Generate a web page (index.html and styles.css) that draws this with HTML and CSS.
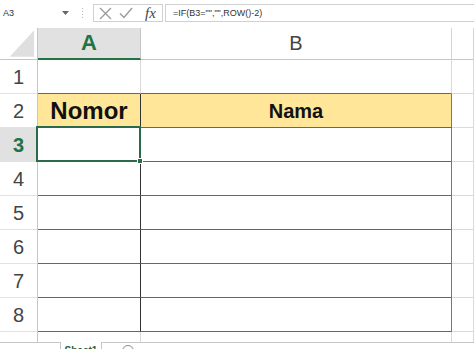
FILE: index.html
```html
<!DOCTYPE html>
<html lang="en">
  <head>
    <meta charset="UTF-8" />
    <meta name="viewport" content="width=device-width, initial-scale=1.0" />
    <title>Nomor otomatis</title>
    <link rel="stylesheet" href="styles.css">
  </head>
  <body>
    <!-- Formula bar -->
    <div class="formula-bar">
      <div class="name-box">
        <span>A3</span>
        <svg class="caret" width="7" height="4" viewBox="0 0 7 4"><path d="M0 0h7L3.5 4z" fill="#666"/></svg>
      </div>
      <div class="grip">
        <svg width="3" height="11" viewBox="0 0 3 11"><g fill="#b5b5b5"><rect x="1" y="0" width="1" height="1"/><rect x="1" y="3" width="1" height="1"/><rect x="1" y="6" width="1" height="1"/><rect x="1" y="9" width="1" height="1"/></g></svg>
      </div>
      <div class="fx-buttons">
        <svg width="13" height="13" viewBox="0 0 13 13"><path d="M1 1l11 11M12 1L1 12" stroke="#9a9a9a" stroke-width="1.3" fill="none"/></svg>
        <svg width="14" height="12" viewBox="0 0 14 12"><path d="M1 6.5l4 4L13 1" stroke="#9a9a9a" stroke-width="1.4" fill="none"/></svg>
        <span class="fx">fx</span>
      </div>
      <div class="formula-input">=IF(B3="","",ROW()-2)</div>
    </div>

    <!-- Worksheet -->
    <div class="sheet">
      <div class="grid">
        <div class="corner">
          <svg width="38" height="32" viewBox="0 0 38 32"><path d="M35 2v27H10z" fill="#dfdfdf"/></svg>
        </div>
        <div class="col-head active">A</div>
        <div class="col-head">B</div>
        <div class="col-head"></div>

        <div class="row-head">1</div>
        <div class="cell above"></div>
        <div class="cell above"></div>
        <div class="cell"></div>

        <div class="row-head">2</div>
        <div class="cell tbl-a title big">Nomor</div>
        <div class="cell tbl-b title">Nama</div>
        <div class="cell"></div>

        <div class="row-head active">3</div>
        <div class="cell tbl-a selected"></div>
        <div class="cell tbl-b"></div>
        <div class="cell"></div>

        <div class="row-head">4</div>
        <div class="cell tbl-a"></div>
        <div class="cell tbl-b"></div>
        <div class="cell"></div>

        <div class="row-head">5</div>
        <div class="cell tbl-a"></div>
        <div class="cell tbl-b"></div>
        <div class="cell"></div>

        <div class="row-head">6</div>
        <div class="cell tbl-a"></div>
        <div class="cell tbl-b"></div>
        <div class="cell"></div>

        <div class="row-head">7</div>
        <div class="cell tbl-a"></div>
        <div class="cell tbl-b"></div>
        <div class="cell"></div>

        <div class="row-head">8</div>
        <div class="cell tbl-a"></div>
        <div class="cell tbl-b"></div>
        <div class="cell"></div>

        <div class="row-head">9</div>
        <div class="cell"></div>
        <div class="cell"></div>
        <div class="cell"></div>
      </div>
    </div>

    <!-- Sheet tabs -->
    <div class="tabs">
      <div class="tab-nav"></div>
      <div class="tab active">Sheet1</div>
      <div class="tab-rest"><span class="add-sheet"></span></div>
    </div>
  </body>
</html>
```

FILE: styles.css
```css
body {
  margin: 0;
  height: 349px;
  overflow: hidden;
  background: #fff;
  font-family: "Liberation Sans", Arial, sans-serif;
  color: #444;
}

/* Formula bar */
.formula-bar {
  height: 28px;
  display: flex;
  align-items: flex-start;
  padding-top: 4px;
  box-sizing: border-box;
}

.name-box {
  width: 72px;
  height: 18px;
  display: flex;
  align-items: center;
  justify-content: space-between;
  padding: 0 3px;
  box-sizing: border-box;
  font-size: 9px;
  color: #333;
}

.grip {
  width: 21px;
  height: 18px;
  display: flex;
  align-items: center;
  justify-content: center;
}

.fx-buttons {
  width: 70px;
  height: 18px;
  border: 1px solid #d0d0d0;
  box-sizing: border-box;
  display: flex;
  align-items: center;
  padding-left: 5px;
  gap: 7px;
}

.fx {
  font-family: "Liberation Serif", serif;
  font-style: italic;
  font-size: 15px;
  color: #444;
  margin-left: 5px;
  line-height: 1;
}

.formula-input {
  flex: 1;
  height: 18px;
  margin-left: 2px;
  border: 1px solid #d0d0d0;
  border-right: none;
  box-sizing: border-box;
  padding-left: 7px;
  font-size: 9px;
  line-height: 16px;
  color: #333;
}

/* Worksheet grid */
.sheet {
  height: 314px;
  overflow: hidden;
}

.grid {
  display: grid;
  grid-template-columns: 38px 103px 311px 1fr;
  grid-template-rows: 32px repeat(9, 34px);
}

.grid > div {
  box-sizing: border-box;
  display: flex;
  align-items: center;
  justify-content: center;
}

.corner {
  border-right: 1px solid #c6c6c6;
  border-bottom: 1px solid #c6c6c6;
}

.col-head {
  font-size: 20px;
  border-right: 1px solid #d4d4d4;
  border-bottom: 1px solid #c6c6c6;
}

.col-head.active {
  background: #e1e1e1;
  color: #217346;
  font-weight: bold;
  font-size: 22px;
  border-bottom: 2px solid #217346;
  border-right-color: #c6c6c6;
}

.row-head {
  font-size: 20px;
  padding-top: 2px;
  border-right: 1px solid #c6c6c6;
  border-bottom: 1px solid #e2e2e2;
}

.row-head.active {
  background: #e1e1e1;
  color: #217346;
  font-weight: bold;
}

.cell {
  border-right: 1px solid #dadada;
  border-bottom: 1px solid #dadada;
  color: #111;
  font-weight: bold;
  font-size: 20px;
  position: relative;
}

.cell.above {
  border-bottom-color: #666;
}

.cell.tbl-a {
  border-right-color: #333;
  border-bottom-color: #666;
}

.cell.tbl-b {
  border-right-color: #777;
  border-bottom-color: #666;
}

.cell.title {
  background: #ffe699;
  padding-top: 1px;
}

.cell.big {
  font-size: 24px;
}

/* Active cell outline */
.cell.selected::after {
  content: "";
  position: absolute;
  top: -2px;
  left: -2px;
  right: -1px;
  bottom: -1px;
  border: 2px solid #2c6a4c;
}

.cell.selected::before {
  content: "";
  position: absolute;
  right: -3px;
  bottom: -3px;
  width: 4px;
  height: 4px;
  background: #2c6a4c;
  border: 1px solid #fff;
  z-index: 1;
}

/* Sheet tabs */
.tabs {
  display: flex;
  height: 30px;
}

.tab-nav {
  width: 60px;
  border-top: 1px solid #c6c6c6;
  border-right: 1px solid #c6c6c6;
}

.tab {
  width: 40px;
  text-align: center;
  font-size: 10px;
  font-weight: bold;
  color: #1f5f3c;
  padding-top: 3px;
}

.tab-rest {
  flex: 1;
  border-top: 1px solid #c6c6c6;
  border-left: 1px solid #c6c6c6;
}

.add-sheet {
  display: block;
  width: 10px;
  height: 10px;
  margin: 2px 0 0 20px;
  border: 1px solid #8a8a8a;
  border-radius: 50%;
}
```
